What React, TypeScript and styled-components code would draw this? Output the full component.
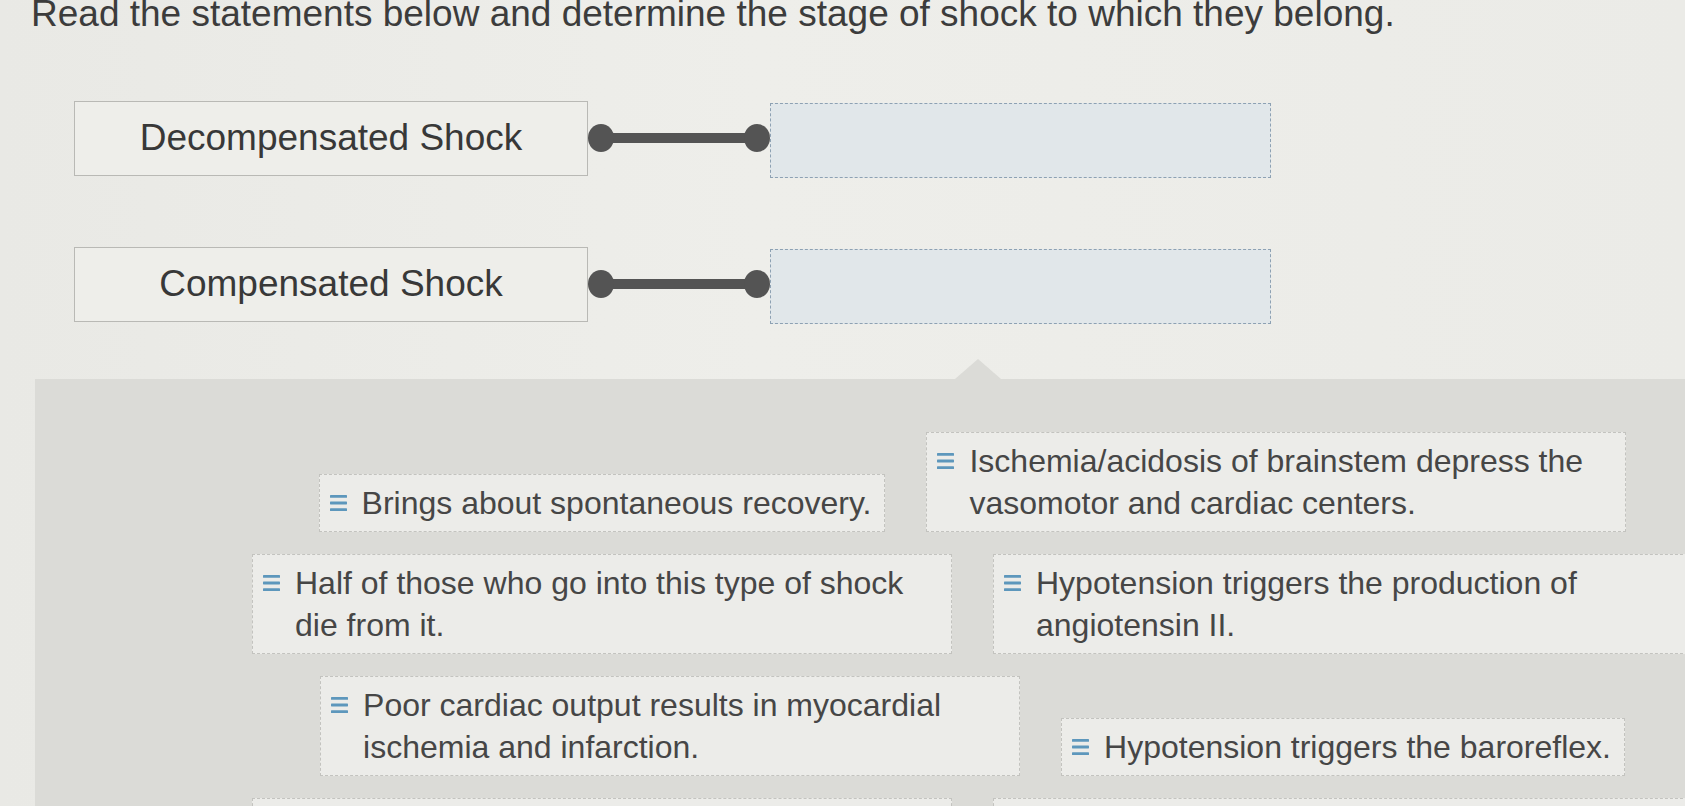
import React from "react";
import styled, { createGlobalStyle } from "styled-components";

const GlobalStyle = createGlobalStyle`
  html, body {
    margin: 0;
    padding: 0;
    overflow: hidden;
    background: #ebebe7;
  }
  body {
    font-family: "Liberation Sans", Arial, Helvetica, sans-serif;
  }
`;

const Page = styled.div`
  width: 1685px;
  height: 806px;
  overflow: hidden;
  padding-left: 31px;
  box-sizing: border-box;
  background: linear-gradient(90deg, #e9e9e5 0%, #eeeeea 45%, #ebebe7 100%);
`;

const Title = styled.h1`
  margin: 0;
  font-size: 37px;
  line-height: 28px;
  font-weight: 400;
  color: #3c3c3c;
  white-space: nowrap;
`;

const MatchList = styled.div`
  margin-top: 70px;
  margin-left: 43px;
  display: flex;
  flex-direction: column;
  gap: 66px;
`;

const MatchRow = styled.div`
  display: flex;
  align-items: center;
`;

const Term = styled.div`
  width: 514px;
  height: 75px;
  box-sizing: border-box;
  border: 1.5px solid #b9b9b5;
  background: #eeeeea;
  display: flex;
  align-items: center;
  justify-content: center;
  font-size: 37px;
  color: #383838;
`;

const DropZone = styled.div`
  width: 501px;
  height: 75px;
  box-sizing: border-box;
  border: 1.5px dashed #8da1b3;
  background: #e1e7ea;
  margin-top: 5px;
`;

const Connector = () => (
  <svg width="182" height="28" viewBox="0 0 182 28" style={{ display: "block" }}>
    <rect x="13" y="9" width="156" height="10" fill="#545454" />
    <ellipse cx="13" cy="14" rx="13" ry="14" fill="#545454" />
    <ellipse cx="169" cy="14" rx="13" ry="14" fill="#545454" />
  </svg>
);

const Bank = styled.div`
  position: relative;
  margin-top: 55px;
  margin-left: 4px;
  width: 1875px;
  height: 500px;
  background: #dbdbd7;
  box-sizing: border-box;
  padding-top: 53px;

  &::before {
    content: "";
    position: absolute;
    left: 920px;
    top: -20px;
    border-left: 23px solid transparent;
    border-right: 23px solid transparent;
    border-bottom: 20px solid #dbdbd7;
  }
`;

const CardWrap = styled.div`
  display: flex;
  flex-wrap: wrap;
  justify-content: center;
  align-items: flex-end;
  column-gap: 41px;
  row-gap: 22px;
`;

const Card = styled.div`
  max-width: 700px;
  box-sizing: border-box;
  display: flex;
  align-items: flex-start;
  gap: 15px;
  padding: 7px 13px 7px 10px;
  background: #ecece9;
  border: 1.5px dashed #c3c3bf;
  font-size: 32px;
  line-height: 42px;
  color: #464646;
`;

const Grip = styled.svg`
  flex: none;
  margin-top: 12px;
  display: block;
`;

const CardText = styled.span`
  display: block;
`;

const GripIcon = () => (
  <Grip width="17" height="18" viewBox="0 0 17 18">
    <rect x="0" y="1" width="17" height="2.8" rx="0.6" fill="#5d97bc" />
    <rect x="0" y="7.6" width="17" height="2.8" rx="0.6" fill="#5d97bc" />
    <rect x="0" y="14.2" width="17" height="2.8" rx="0.6" fill="#5d97bc" />
  </Grip>
);

const terms = ["Decompensated Shock", "Compensated Shock"];

const statements = [
  "Brings about spontaneous recovery.",
  "Ischemia/acidosis of brainstem depress the vasomotor and cardiac centers.",
  "Half of those who go into this type of shock die from it.",
  "Hypotension triggers the production of angiotensin II.",
  "Poor cardiac output results in myocardial ischemia and infarction.",
  "Hypotension triggers the baroreflex.",
  "Blood is shunted away from the skin and digestive organs to vital organs.",
  "Tissues become hypoxic and cells switch to anaerobic metabolism.",
];

export default function App() {
  return (
    <>
      <GlobalStyle />
      <Page>
        <Title>Read the statements below and determine the stage of shock to which they belong.</Title>
        <MatchList>
          {terms.map((t) => (
            <MatchRow key={t}>
              <Term>{t}</Term>
              <Connector />
              <DropZone />
            </MatchRow>
          ))}
        </MatchList>
        <Bank>
          <CardWrap>
            {statements.map((s) => (
              <Card key={s}>
                <GripIcon />
                <CardText>{s}</CardText>
              </Card>
            ))}
          </CardWrap>
        </Bank>
      </Page>
    </>
  );
}
